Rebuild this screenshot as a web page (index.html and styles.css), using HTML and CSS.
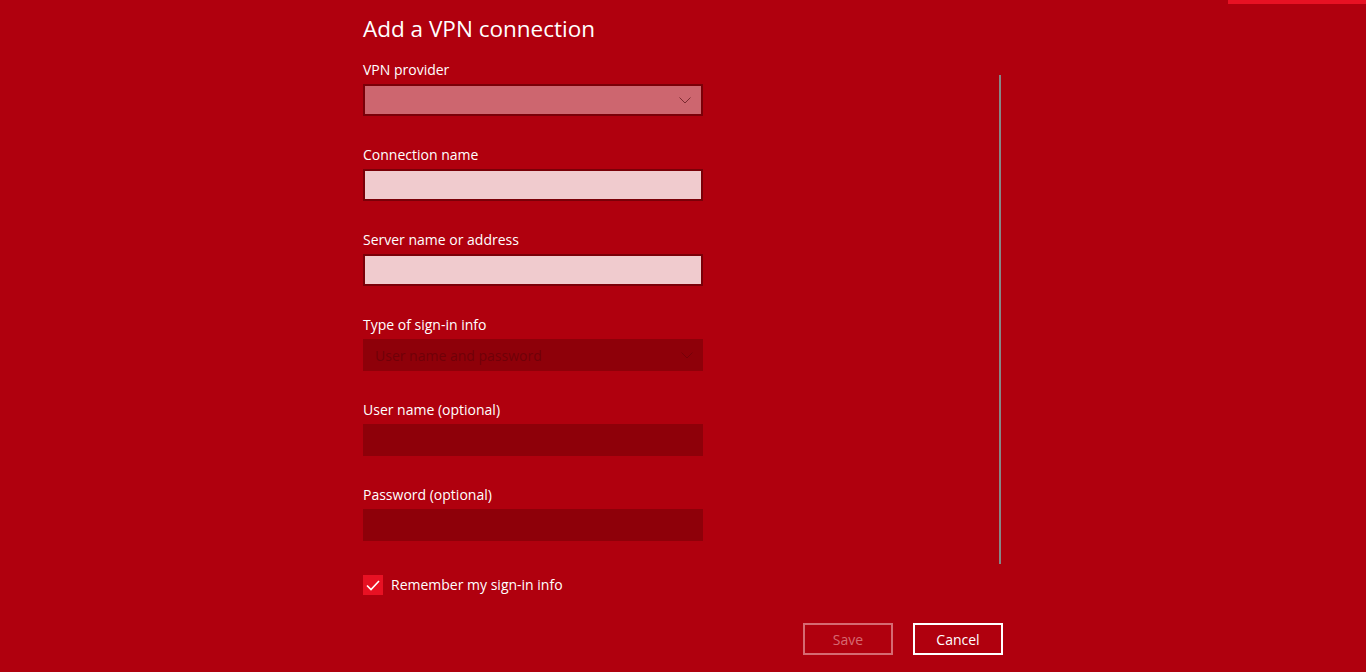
FILE: index.html
```html
<!DOCTYPE html>
<html lang="en">

<head>
    <meta charset="UTF-8">
    <meta name="viewport" content="width=device-width, initial-scale=1.0">
    <link rel="stylesheet" href="styles.css">
    <title>Add a VPN connection</title>
</head>

<body>
    <div class="accent-bar"></div>
    <div class="scrollbar"></div>

    <div class="dialog">
        <h1 class="title">Add a VPN connection</h1>

        <div class="field">
            <label class="label">VPN provider</label>
            <div class="select">
                <span class="select-text"></span>
                <svg class="chevron" width="12" height="7" viewBox="0 0 12 7">
                    <path d="M0.5 0.5 L6 6 L11.5 0.5" fill="none" stroke="#7a2a30" stroke-width="1"/>
                </svg>
            </div>
        </div>

        <div class="field">
            <label class="label">Connection name</label>
            <div class="input"></div>
        </div>

        <div class="field">
            <label class="label">Server name or address</label>
            <div class="input"></div>
        </div>

        <div class="field">
            <label class="label">Type of sign-in info</label>
            <div class="select disabled">
                <span class="select-text">User name and password</span>
                <svg class="chevron" width="12" height="7" viewBox="0 0 12 7">
                    <path d="M0.5 0.5 L6 6 L11.5 0.5" fill="none" stroke="#760008" stroke-width="1"/>
                </svg>
            </div>
        </div>

        <div class="field">
            <label class="label">User name (optional)</label>
            <div class="input disabled"></div>
        </div>

        <div class="field">
            <label class="label">Password (optional)</label>
            <div class="input disabled"></div>
        </div>

        <div class="check-row">
            <span class="checkbox">
                <svg width="14" height="11" viewBox="0 0 14 11">
                    <path d="M1 5.5 L5 9.5 L13 1" fill="none" stroke="#ffffff" stroke-width="1.6"/>
                </svg>
            </span>
            <span class="check-label">Remember my sign-in info</span>
        </div>

        <div class="buttons">
            <button class="btn btn-save">Save</button>
            <button class="btn btn-cancel">Cancel</button>
        </div>
    </div>
</body>

</html>
```

FILE: styles.css
```css
body {
    background-color: #b0000e;
    color: white;
    font-family: "Open Sans", "Noto Sans", sans-serif;
    margin: 0;
    padding: 0;
    height: 672px;
    overflow: hidden;
}

.accent-bar {
    position: absolute;
    top: 0;
    right: 0;
    width: 138px;
    height: 4px;
    background-color: #e81123;
}

.scrollbar {
    position: absolute;
    left: 999px;
    top: 75px;
    width: 2px;
    height: 489px;
    background-color: #868686;
}

.dialog {
    width: 640px;
    padding: 13px 0 0 363px;
}

.title {
    font-size: 22.5px;
    font-weight: 400;
    line-height: 32px;
    margin: 0 0 14px 0;
}

.field {
    width: 340px;
    margin-bottom: 28px;
}

.label {
    display: block;
    font-size: 14px;
    line-height: 20px;
    padding-top: 1px;
    margin-bottom: 4px;
}

.select,
.input {
    box-sizing: border-box;
    height: 32px;
    display: flex;
    align-items: center;
    justify-content: space-between;
    padding: 0 10px 0 12px;
}

.select {
    background-color: #cd666f;
    border: 2px solid #7a0008;
}

.input {
    background-color: #f0cbce;
    border: 2px solid #7a0008;
}

.select.disabled,
.input.disabled {
    background-color: #8e0009;
    border: none;
}

.select-text {
    font-size: 14px;
    color: #700008;
}

.check-row {
    display: flex;
    align-items: center;
    margin-top: 34px;
    height: 20px;
}

.checkbox {
    width: 20px;
    height: 20px;
    background-color: #e81123;
    display: flex;
    align-items: center;
    justify-content: center;
    margin-right: 8px;
}

.check-label {
    font-size: 14px;
    line-height: 20px;
}

.buttons {
    display: flex;
    justify-content: flex-end;
    gap: 20px;
    margin-top: 28px;
}

.btn {
    width: 90px;
    height: 32px;
    background-color: transparent;
    font-family: inherit;
    font-size: 14px;
    padding: 0;
    box-sizing: border-box;
}

.btn-save {
    border: 2px solid #d66a72;
    color: #d66a72;
}

.btn-cancel {
    border: 2px solid #ffffff;
    color: #ffffff;
}
```
